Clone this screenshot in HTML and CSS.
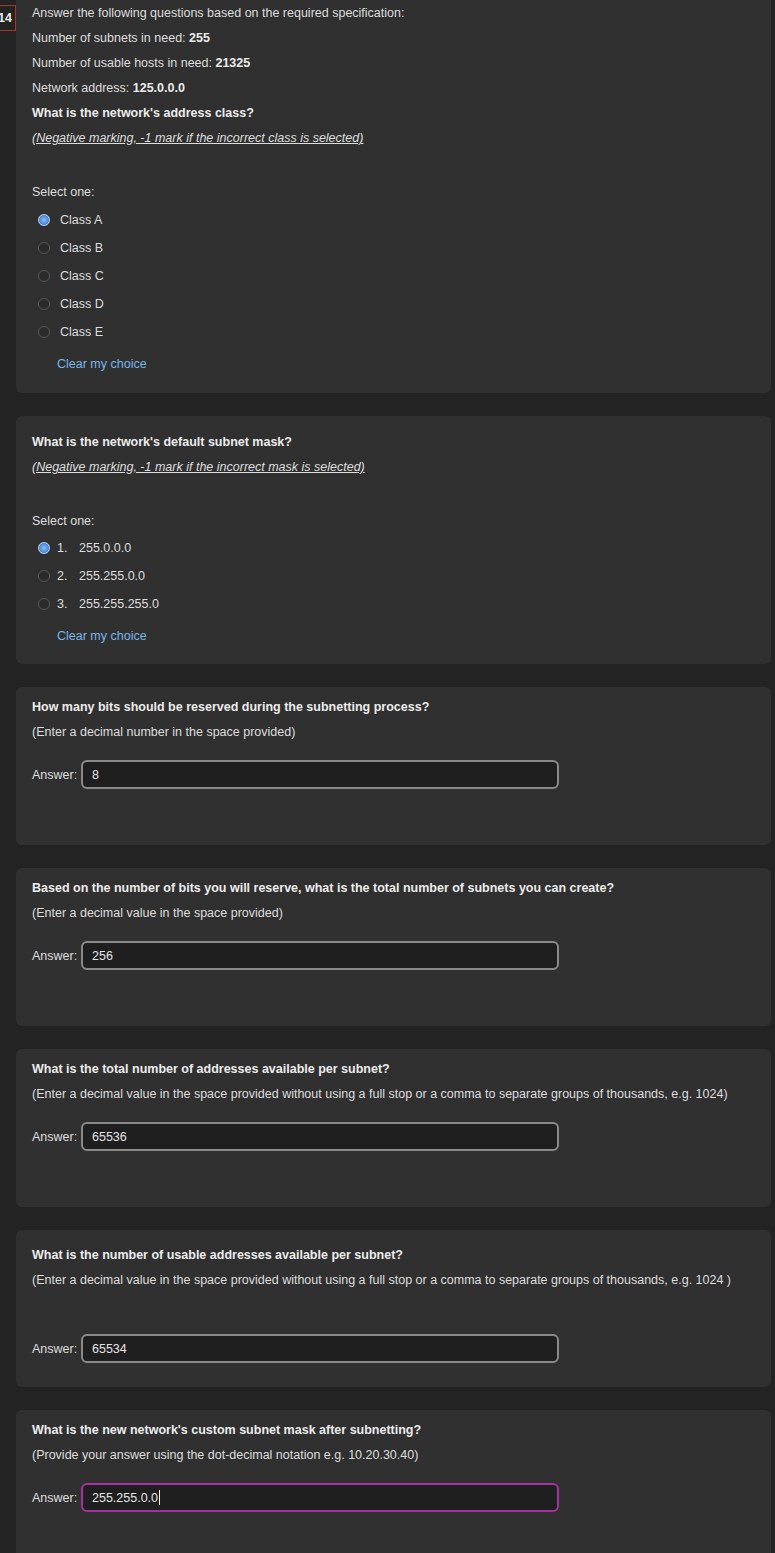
FILE: index.html
```html
<!DOCTYPE html>
<html lang="en">
<head>
<meta charset="utf-8">
<title>Quiz question 14</title>
<link rel="stylesheet" href="styles.css">
</head>
<body>
<div class="qno">14</div>
<main class="quiz">
  <section class="card card-first">
    <p class="line">Answer the following questions based on the required specification:</p>
    <p class="line">Number of subnets in need: <b>255</b></p>
    <p class="line">Number of usable hosts in need: <b>21325</b></p>
    <p class="line">Network address: <b>125.0.0.0</b></p>
    <p class="line q">What is the network's address class?</p>
    <p class="line neg">(Negative marking, -1 mark if the incorrect class is selected)</p>
    <p class="line select">Select one:</p>
    <div class="options">
      <div class="opt"><span class="radio on"></span><span class="lbl">Class A</span></div>
      <div class="opt"><span class="radio"></span><span class="lbl">Class B</span></div>
      <div class="opt"><span class="radio"></span><span class="lbl">Class C</span></div>
      <div class="opt"><span class="radio"></span><span class="lbl">Class D</span></div>
      <div class="opt"><span class="radio"></span><span class="lbl">Class E</span></div>
    </div>
    <p class="line clear">Clear my choice</p>
  </section>

  <section class="card card-mc">
    <p class="line q">What is the network's default subnet mask?</p>
    <p class="line neg">(Negative marking, -1 mark if the incorrect mask is selected)</p>
    <p class="line select">Select one:</p>
    <div class="options">
      <div class="opt"><span class="radio on"></span><span class="num">1.</span><span>255.0.0.0</span></div>
      <div class="opt"><span class="radio"></span><span class="num">2.</span><span>255.255.0.0</span></div>
      <div class="opt"><span class="radio"></span><span class="num">3.</span><span>255.255.255.0</span></div>
    </div>
    <p class="line clear">Clear my choice</p>
  </section>

  <section class="card card-field">
    <p class="line q">How many bits should be reserved during the subnetting process?</p>
    <p class="line">(Enter a decimal number in the space provided)</p>
    <div class="answer"><span class="alabel">Answer:</span><span class="field">8</span></div>
  </section>

  <section class="card card-field">
    <p class="line q">Based on the number of bits you will reserve, what is the total number of subnets you can create?</p>
    <p class="line">(Enter a decimal value in the space provided)</p>
    <div class="answer"><span class="alabel">Answer:</span><span class="field">256</span></div>
  </section>

  <section class="card card-field">
    <p class="line q">What is the total number of addresses available per subnet?</p>
    <p class="line">(Enter a decimal value in the space provided without using a full stop or a comma to separate groups of thousands, e.g. 1024)</p>
    <div class="answer"><span class="alabel">Answer:</span><span class="field">65536</span></div>
  </section>

  <section class="card card-field card-spaced">
    <p class="line q">What is the number of usable addresses available per subnet?</p>
    <p class="line">(Enter a decimal value in the space provided without using a full stop or a comma to separate groups of thousands, e.g. 1024 )</p>
    <div class="answer"><span class="alabel">Answer:</span><span class="field">65534</span></div>
  </section>

  <section class="card card-field">
    <p class="line q">What is the new network's custom subnet mask after subnetting?</p>
    <p class="line">(Provide your answer using the dot-decimal notation e.g. 10.20.30.40)</p>
    <div class="answer"><span class="alabel">Answer:</span><span class="field focus">255.255.0.0<span class="caret"></span></span></div>
  </section>
</main>
</body>
</html>
```
FILE: styles.css
```css
html, body {
  margin: 0;
  padding: 0;
  background: #232323;
}
body {
  position: relative;
  font-family: "Liberation Sans", Arial, sans-serif;
  font-size: 12.5px;
  color: #dedede;
  overflow: hidden;
}
.qno {
  position: absolute;
  left: -14px;
  top: 5px;
  width: 30px;
  height: 26px;
  border: 1px solid #a8352c;
  box-sizing: border-box;
  color: #f0f0f0;
  font-weight: bold;
  font-size: 12.5px;
  line-height: 24px;
  text-align: right;
  padding-right: 3px;
}
.quiz {
  display: flex;
  flex-direction: column;
  gap: 23px;
  margin: -11px 4px 0 16px;
}
.card {
  background: #303030;
  border-radius: 6px;
  padding: 8px 16px 56px 16px;
}
.card-first {
  padding-top: 12px;
  padding-bottom: 16px;
}
.card-mc {
  padding-top: 14px;
  padding-bottom: 15px;
}
.card-mc .options {
  margin-top: 0;
}
.card-spaced {
  padding-top: 13px;
  padding-bottom: 24px;
}
.line {
  margin: 0;
  line-height: 25px;
  white-space: nowrap;
}
.line b, .q {
  font-weight: bold;
  color: #ececec;
}
.neg {
  font-style: italic;
  text-decoration: underline;
}
.select {
  margin-top: 29px;
}
.options {
  margin-top: 1px;
  display: flex;
  flex-direction: column;
}
.opt {
  height: 28px;
  display: flex;
  align-items: center;
  padding-left: 6px;
}
.radio {
  width: 12px;
  height: 12px;
  box-sizing: border-box;
  border-radius: 50%;
  border: 1px solid #575757;
  background: #2b2b2b;
  margin-right: 10px;
  flex: none;
}
.radio.on {
  border: 1px solid #b7d3f5;
  background: radial-gradient(circle at 50% 50%, #8ab8f0 0, #5d98e0 45%, #3f7bd0 70%, #a9c9f2 72%);
}
.card-mc .radio {
  margin-right: 7px;
}
.num {
  width: 22px;
}
.clear {
  margin-top: 6px;
  padding-left: 25px;
  color: #7ab6e6;
}
.answer {
  display: flex;
  align-items: center;
  margin-top: 15px;
}
.card-spaced .answer {
  margin-top: 41px;
}
.alabel {
  width: 49px;
  flex: none;
}
.field {
  display: flex;
  align-items: center;
  box-sizing: border-box;
  width: 478px;
  height: 29px;
  border: 2px solid #8a8a8a;
  border-radius: 6px;
  background: #1f1f1f;
  padding-left: 9px;
  color: #e4e4e4;
}
.field.focus {
  border-color: #a5309f;
}
.caret {
  display: inline-block;
  width: 1px;
  height: 15px;
  background: #f0f0f0;
  margin-left: 1px;
}
```
